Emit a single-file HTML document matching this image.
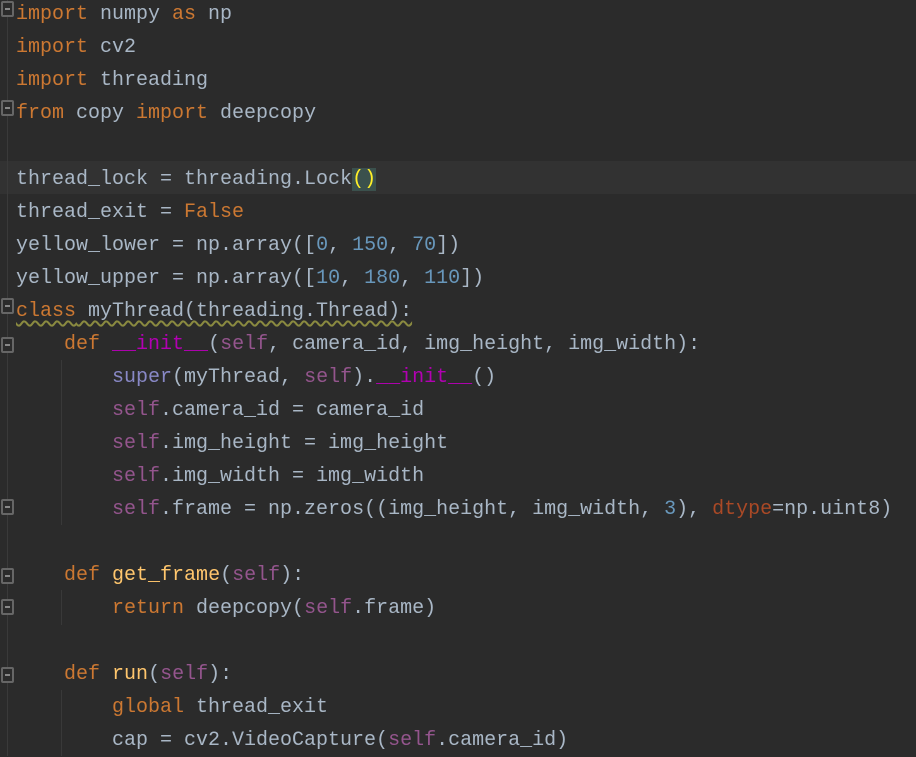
<!DOCTYPE html><html><head><style>
body{margin:0;width:916px;height:756px;background:#2b2b2b;overflow:hidden;position:relative;font-family:"Liberation Mono",monospace;font-size:20px;color:#a9b7c6}
.l{position:absolute;left:16px;height:33px;line-height:33px;white-space:pre}
.k{color:#cc7832}.n{color:#6897bb}.s{color:#94558d}.m{color:#b200b2}.f{color:#ffc66d}.p{color:#aa4926}
.cur{position:absolute;left:0;top:161px;width:916px;height:33px;background:#323232}
.g{position:absolute;width:1px;background:#393939}
.fold{position:absolute;left:1px;width:13px;height:16px;border:2px solid #666;box-sizing:border-box;background:#2b2b2b;border-radius:2px}
.fold:after{content:"";position:absolute;left:2px;right:2px;top:5px;height:2px;background:#888}
</style></head><body>
<div class="cur"></div>
<div class="g" style="left:7px;top:0;height:756px;background:#3a3a3a"></div>
<div class="g" style="left:61px;top:360px;height:165px"></div>
<div class="g" style="left:61px;top:590px;height:35px"></div>
<div class="g" style="left:61px;top:690px;height:66px"></div>
<div class="fold" style="top:1px"></div>
<div class="fold" style="top:100px"></div>
<div class="fold" style="top:298px"></div>
<div class="fold" style="top:337px"></div>
<div class="fold" style="top:499px"></div>
<div class="fold" style="top:568px"></div>
<div class="fold" style="top:599px"></div>
<div class="fold" style="top:667px"></div>
<div class="l" style="top:-2px"><span class="k">import</span> numpy <span class="k">as</span> np</div>
<div class="l" style="top:31px"><span class="k">import</span> cv2</div>
<div class="l" style="top:64px"><span class="k">import</span> threading</div>
<div class="l" style="top:97px"><span class="k">from</span> copy <span class="k">import</span> deepcopy</div>
<div class="l" style="top:163px">thread_lock = threading.Lock<span style="color:#ffef28;background:#3b514d">()</span></div>
<div class="l" style="top:196px">thread_exit = <span class="k">False</span></div>
<div class="l" style="top:229px">yellow_lower = np.array([<span class="n">0</span>, <span class="n">150</span>, <span class="n">70</span>])</div>
<div class="l" style="top:262px">yellow_upper = np.array([<span class="n">10</span>, <span class="n">180</span>, <span class="n">110</span>])</div>
<div class="l" style="top:295px;text-decoration:underline wavy #8a8a40;text-underline-offset:4px"><span class="k">class</span> myThread(threading.Thread):</div>
<div class="l" style="top:328px">    <span class="k">def</span> <span class="m">__init__</span>(<span class="s">self</span>, camera_id, img_height, img_width):</div>
<div class="l" style="top:361px">        <span class="m" style="color:#8888c6">super</span>(myThread, <span class="s">self</span>).<span class="m">__init__</span>()</div>
<div class="l" style="top:394px">        <span class="s">self</span>.camera_id = camera_id</div>
<div class="l" style="top:427px">        <span class="s">self</span>.img_height = img_height</div>
<div class="l" style="top:460px">        <span class="s">self</span>.img_width = img_width</div>
<div class="l" style="top:493px">        <span class="s">self</span>.frame = np.zeros((img_height, img_width, <span class="n">3</span>), <span class="p">dtype</span>=np.uint8)</div>
<div class="l" style="top:559px">    <span class="k">def</span> <span class="f">get_frame</span>(<span class="s">self</span>):</div>
<div class="l" style="top:592px">        <span class="k">return</span> deepcopy(<span class="s">self</span>.frame)</div>
<div class="l" style="top:658px">    <span class="k">def</span> <span class="f">run</span>(<span class="s">self</span>):</div>
<div class="l" style="top:691px">        <span class="k">global</span> thread_exit</div>
<div class="l" style="top:724px">        cap = cv2.VideoCapture(<span class="s">self</span>.camera_id)</div>
</body></html>
